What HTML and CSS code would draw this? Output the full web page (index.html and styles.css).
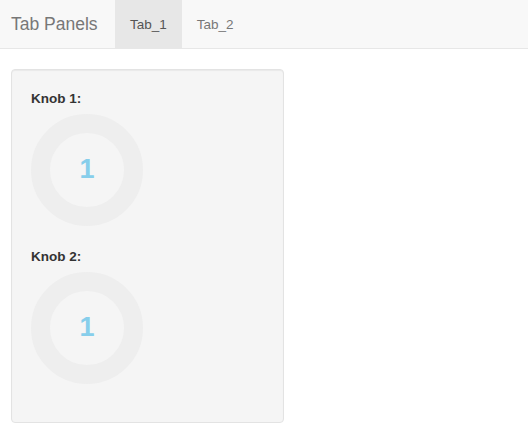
FILE: index.html
```html
<!DOCTYPE html>
<html>
<head>
<meta charset="utf-8">
<title>Tab Panels</title>
<link rel="stylesheet" href="styles.css">
</head>
<body>
<nav class="navbar">
  <span class="brand">Tab Panels</span>
  <ul class="tabs">
    <li class="tab active">Tab_1</li>
    <li class="tab">Tab_2</li>
  </ul>
</nav>
<main class="content">
  <div class="well">
    <div class="group">
      <label class="label">Knob 1:</label>
      <div class="knob"><span class="knob-value">1</span></div>
    </div>
    <div class="group">
      <label class="label">Knob 2:</label>
      <div class="knob"><span class="knob-value">1</span></div>
    </div>
  </div>
</main>
</body>
</html>
```
FILE: styles.css
```css
* { box-sizing: border-box; }
html, body {
  margin: 0;
  padding: 0;
  background: #fff;
  font-family: "Liberation Sans", Arial, sans-serif;
  color: #333;
}
.navbar {
  display: flex;
  align-items: stretch;
  height: 49px;
  background: #f8f8f8;
  border-bottom: 1px solid #e7e7e7;
}
.brand {
  width: 115px;
  padding-left: 11px;
  font-size: 17.5px;
  line-height: 48px;
  color: #777;
}
.tabs {
  display: flex;
  margin: 0;
  padding: 0;
  list-style: none;
}
.tab {
  padding: 1px 15px 0;
  font-size: 13.5px;
  line-height: 47px;
  color: #777;
}
.tab.active {
  background: #e7e7e7;
  color: #555;
}
.content {
  padding: 20px 0 0 11px;
}
.well {
  width: 273px;
  height: 354px;
  padding: 19px 19px;
  background: #f5f5f5;
  border: 1px solid #e3e3e3;
  border-radius: 4px;
  box-shadow: inset 0 1px 1px rgba(0,0,0,0.05);
}
.group + .group {
  margin-top: 21px;
}
.label {
  display: block;
  font-size: 13.5px;
  font-weight: bold;
  line-height: 19px;
  margin-bottom: 6px;
  color: #333;
}
.knob {
  width: 112px;
  height: 112px;
  border-radius: 50%;
  border: 19px solid #eeeeee;
  display: flex;
  align-items: center;
  justify-content: center;
}
.knob-value {
  font-size: 27px;
  font-weight: bold;
  color: #87ceeb;
  line-height: 1;
  margin-top: -1px;
}
```
